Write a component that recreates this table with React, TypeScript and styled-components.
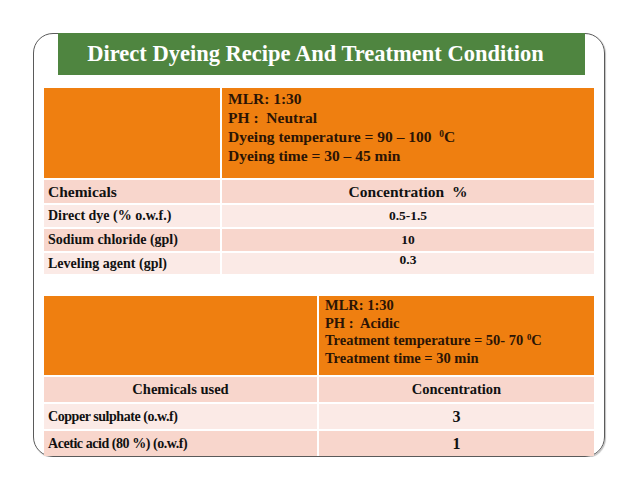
import styled, { createGlobalStyle } from 'styled-components';

const GlobalStyle = createGlobalStyle`
  html, body {
    margin: 0;
    padding: 0;
    background: #fff;
  }
  body {
    font-family: 'Liberation Serif', 'Times New Roman', serif;
    color: #1a1a1a;
  }
`;

const Frame = styled.div`
  box-sizing: border-box;
  margin: 33px 0 0 33px;
  width: 572px;
  height: 424px;
  border: 1px solid #5a5a5a;
  border-radius: 20px;
  box-shadow: 1px 1px 1px rgba(0, 0, 0, 0.25);
  padding: 0 10px;
`;

const TitleBar = styled.h1`
  box-sizing: border-box;
  margin: -1px 9px 0 14px;
  height: 42px;
  background: #4f8540;
  color: #fff;
  font-size: 22.5px;
  font-weight: bold;
  display: flex;
  align-items: center;
  justify-content: center;
  padding-right: 12px;
`;

const Table = styled.div<{ $col: number; $rows: string; $top: number }>`
  display: grid;
  grid-template-columns: ${(p) => p.$col}px 1fr;
  grid-template-rows: ${(p) => p.$rows};
  gap: 2px;
  margin-top: ${(p) => p.$top}px;
  background: #fff;
`;

const HeaderCell = styled.div`
  background: #ef7f10;
`;

const Conditions = styled.div<{ $size: number; $line: number }>`
  background: #ef7f10;
  padding: 1px 6px;
  color: #2b1405;
  font-weight: bold;
  font-size: ${(p) => p.$size}px;
  line-height: ${(p) => p.$line}px;

  sup {
    font-size: 0.6em;
    line-height: 0;
    vertical-align: 0.55em;
  }
`;

const Cell = styled.div<{
  $tone: 'dark' | 'light';
  $center?: boolean;
  $size: number;
  $top?: boolean;
  $tight?: boolean;
}>`
  background: ${(p) => (p.$tone === 'dark' ? '#f8d6cc' : '#fbeae6')};
  display: flex;
  align-items: ${(p) => (p.$top ? 'flex-start' : 'center')};
  justify-content: ${(p) => (p.$center ? 'center' : 'flex-start')};
  padding: 0 4px;
  font-size: ${(p) => p.$size}px;
  letter-spacing: ${(p) => (p.$tight ? '-0.45px' : 'normal')};
  line-height: 1.1;
  font-weight: bold;
  color: #111;
  white-space: pre;
`;

type Row = { name: string; value: string; top?: boolean };

const recipeRows: Row[] = [
  { name: 'Direct dye (% o.w.f.)', value: '0.5-1.5' },
  { name: 'Sodium chloride (gpl)', value: '10' },
  { name: 'Leveling agent (gpl)', value: '0.3', top: true },
];

const treatmentRows: Row[] = [
  { name: 'Copper sulphate (o.w.f)', value: '3' },
  { name: 'Acetic acid (80 %) (o.w.f)', value: '1' },
];

export default function App() {
  return (
    <>
      <GlobalStyle />
      <Frame>
        <TitleBar>Direct Dyeing Recipe And Treatment Condition</TitleBar>

        <Table $col={176} $rows="90px 23px 22px 22px 21px" $top={13}>
          <HeaderCell />
          <Conditions $size={15.5} $line={19}>
            MLR: 1:30
            <br />
            PH :&nbsp; Neutral
            <br />
            Dyeing temperature = 90 – 100&nbsp; <sup>0</sup>C
            <br />
            Dyeing time = 30 – 45 min
          </Conditions>
          <Cell $tone="dark" $size={15.5}>
            Chemicals
          </Cell>
          <Cell $tone="dark" $size={15.5} $center>
            {'Concentration  %'}
          </Cell>
          {recipeRows.map((r, i) => (
            <>
              <Cell key={r.name} $tone={i % 2 ? 'dark' : 'light'} $size={14}>
                {r.name}
              </Cell>
              <Cell
                key={r.name + '-v'}
                $tone={i % 2 ? 'dark' : 'light'}
                $size={13.5}
                $center
                $top={r.top}
              >
                {r.value}
              </Cell>
            </>
          ))}
        </Table>

        <Table $col={273} $rows="79px 25px 25px 25px" $top={22}>
          <HeaderCell />
          <Conditions $size={14.5} $line={17.5}>
            MLR: 1:30
            <br />
            PH :&nbsp; Acidic
            <br />
            Treatment temperature = 50- 70 <sup>0</sup>C
            <br />
            Treatment time = 30 min
          </Conditions>
          <Cell $tone="dark" $size={14.5} $center>
            Chemicals used
          </Cell>
          <Cell $tone="dark" $size={14.5} $center>
            Concentration
          </Cell>
          {treatmentRows.map((r, i) => (
            <>
              <Cell key={r.name} $tone={i % 2 ? 'dark' : 'light'} $size={14} $tight>
                {r.name}
              </Cell>
              <Cell key={r.name + '-v'} $tone={i % 2 ? 'dark' : 'light'} $size={16} $center>
                {r.value}
              </Cell>
            </>
          ))}
        </Table>
      </Frame>
    </>
  );
}
